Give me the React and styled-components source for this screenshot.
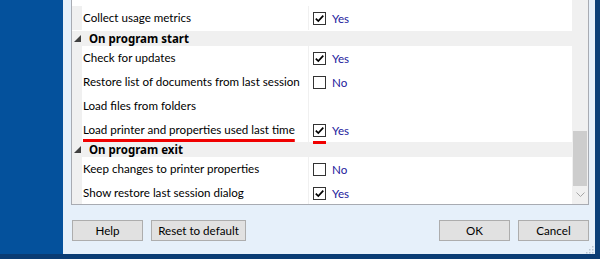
import React from 'react';
import styled, { createGlobalStyle } from 'styled-components';

const GlobalStyle = createGlobalStyle`
  html, body {
    margin: 0;
    padding: 0;
    background: #04519c;
  }
  body {
    font-family: Lato, "Noto Sans", Arial, sans-serif;
    font-size: 11.6px;
    color: #000;
  }
`;

const Screen = styled.div`
  width: 600px;
  height: 259px;
  display: grid;
  grid-template-columns: 63px 1fr 5px;
  grid-template-rows: 254px 5px;
  overflow: hidden;
`;

const DesktopBand = styled.div`
  background: #04519c;
`;

const EdgeRight = styled.div`
  background: #0b3f78;
`;

const EdgeBottom = styled.div`
  grid-column: 1 / -1;
  background: #0a3c74;
`;

const Dialog = styled.div`
  background: #e6f0fa;
  display: flex;
  flex-direction: column;
  padding: 0 6px 0 8px;
  min-width: 0;
`;

const Panel = styled.div`
  height: 204px;
  border: 1px solid #a8abb2;
  border-top: none;
  background: #fff;
  display: grid;
  grid-template-columns: 1fr 16px;
  overflow: hidden;
`;

const List = styled.div`
  padding-top: 6px;
  display: flex;
  flex-direction: column;
  overflow: hidden;
`;

const Row = styled.div`
  height: 24px;
  flex: none;
  display: grid;
  grid-template-columns: 10px 226px 1fr;
`;

const Gutter = styled.div`
  background: #f0f0f0;
`;

const Name = styled.div`
  display: flex;
  align-items: center;
  padding-left: 1px;
  white-space: nowrap;
  overflow: hidden;
  line-height: 16px;
`;

const Marked = styled.span`
  text-decoration: ${(p) => (p.$marked ? 'underline' : 'none')};
  text-decoration-color: #f00000;
  text-decoration-thickness: 3px;
  text-underline-offset: 5px;
  text-decoration-skip-ink: none;
`;

const Value = styled.div`
  border-left: 1px solid #f0f0f0;
  display: flex;
  align-items: center;
  padding-left: 4px;
  gap: 6px;
  color: #22209c;
`;

const Box = styled.span`
  position: relative;
  width: 11px;
  height: 11px;
  border: 1px solid #333;
  background: #fff;
  display: inline-flex;
  align-items: center;
  justify-content: center;
  margin-top: 1px;

  &::after {
    content: '';
    display: ${(p) => (p.$marked ? 'block' : 'none')};
    position: absolute;
    left: -1px;
    right: -1px;
    top: 16px;
    height: 3px;
    background: #f00000;
  }
`;

const Header = styled.div`
  height: 15px;
  flex: none;
  margin-top: ${(p) => (p.$first ? 1 : 0)}px;
  background: #f0f0f0;
  display: flex;
  align-items: center;
  font-family: "Noto Sans", Lato, sans-serif;
  font-size: 11.5px;
  font-weight: 700;
  line-height: 15px;
`;

const Caret = styled.svg`
  width: 7px;
  height: 7px;
  margin: 0 8px 0 2px;
  flex: none;
`;

const ScrollBar = styled.div`
  background: #f0f0f0;
  display: flex;
  flex-direction: column;
  align-items: center;
  padding-top: 131px;
`;

const Thumb = styled.div`
  width: 14px;
  height: 55px;
  background: #cdcdcd;
`;

const ArrowDown = styled.svg`
  width: 9px;
  height: 6px;
  margin-top: 6px;
`;

const Buttons = styled.div`
  display: flex;
  gap: 8px;
  margin-top: 15px;
  padding-left: 1px;
`;

const Spacer = styled.div`
  flex: 1;
`;

const Button = styled.button`
  width: ${(p) => p.$w || 71}px;
  height: 21px;
  padding: 0;
  background: #e1e1e1;
  border: 1px solid #adadad;
  font-family: inherit;
  font-size: 11.6px;
  color: #000;
  line-height: 18px;
`;

const Grip = styled.svg`
  align-self: flex-end;
  width: 10px;
  height: 10px;
  margin: 3px -5px 0 0;
`;

const Check = () => (
  <svg width="11" height="11" viewBox="0 0 11 11">
    <path d="M1.8 5.6 L4.3 8.1 L9.3 2.6" fill="none" stroke="#000" strokeWidth="1.7" />
  </svg>
);

const Prop = ({ name, value, marked }) => (
  <Row>
    <Gutter />
    <Name>
      <Marked $marked={marked}>{name}</Marked>
    </Name>
    <Value>
      {value !== undefined && (
        <>
          <Box $marked={marked}>{value && <Check />}</Box>
          <span>{value ? 'Yes' : 'No'}</span>
        </>
      )}
    </Value>
  </Row>
);

const Section = ({ title, first }) => (
  <Header $first={first}>
    <Caret viewBox="0 0 7 7">
      <polygon points="7,0 7,7 0,7" fill="#404040" />
    </Caret>
    {title}
  </Header>
);

export default function App() {
  return (
    <Screen>
      <GlobalStyle />
      <DesktopBand />
      <Dialog>
        <Panel>
          <List>
            <Prop name="Collect usage metrics" value={true} />
            <Section title="On program start" first />
            <Prop name="Check for updates" value={true} />
            <Prop name="Restore list of documents from last session" value={false} />
            <Prop name="Load files from folders" />
            <Prop name="Load printer and properties used last time" value={true} marked />
            <Section title="On program exit" />
            <Prop name="Keep changes to printer properties" value={false} />
            <Prop name="Show restore last session dialog" value={true} />
          </List>
          <ScrollBar>
            <Thumb />
            <ArrowDown viewBox="0 0 9 6">
              <polyline points="0.5,0.5 4.5,4.5 8.5,0.5" fill="none" stroke="#a6a6a6" strokeWidth="1" />
            </ArrowDown>
          </ScrollBar>
        </Panel>
        <Buttons>
          <Button>Help</Button>
          <Button $w={95}>Reset to default</Button>
          <Spacer />
          <Button>OK</Button>
          <Button>Cancel</Button>
        </Buttons>
        <Grip viewBox="0 0 10 10">
          {[
            [8, 2], [8, 5], [5, 5], [8, 8], [5, 8], [2, 8],
          ].map(([x, y]) => (
            <rect key={`${x}-${y}`} x={x} y={y} width="1.5" height="1.5" fill="#b8c4d0" />
          ))}
        </Grip>
      </Dialog>
      <EdgeRight />
      <EdgeBottom />
    </Screen>
  );
}
